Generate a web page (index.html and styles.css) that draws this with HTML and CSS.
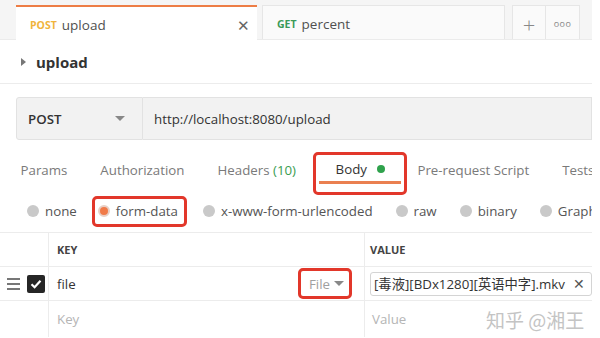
FILE: index.html
```html
<!DOCTYPE html>
<html lang="zh-CN">
<head>
  <meta charset="UTF-8" />
  <title>upload</title>
  <link rel="stylesheet" href="styles.css">
</head>
<body>
  <div class="app">

    <div class="tabbar">
      <div class="tab active">
        <span class="verb post">POST</span>
        <span class="tab-name">upload</span>
        <span class="tab-close">&#x2715;</span>
      </div>
      <div class="tab">
        <span class="verb get">GET</span>
        <span class="tab-name">percent</span>
      </div>
      <div class="tab-actions">
        <span class="tab-btn plus">+</span>
        <span class="tab-btn more">ooo</span>
      </div>
    </div>

    <div class="req-name">
      <span class="caret-right"></span>
      <span class="req-title">upload</span>
    </div>

    <div class="url-bar">
      <div class="method">
        <span>POST</span>
        <span class="caret-down"></span>
      </div>
      <div class="url">http://localhost:8080/upload</div>
    </div>

    <div class="req-tabs">
      <span class="req-tab">Params</span>
      <span class="req-tab">Authorization</span>
      <span class="req-tab">Headers <span class="count">(10)</span></span>
      <span class="mark body-tab">
        <span class="body-label">Body <span class="dot"></span></span>
      </span>
      <span class="req-tab">Pre-request Script</span>
      <span class="req-tab">Tests</span>
    </div>

    <div class="body-types">
      <span class="btype"><span class="radio"></span>none</span>
      <span class="btype mark selected"><span class="radio on"></span>form-data</span>
      <span class="btype"><span class="radio"></span>x-www-form-urlencoded</span>
      <span class="btype"><span class="radio"></span>raw</span>
      <span class="btype"><span class="radio"></span>binary</span>
      <span class="btype"><span class="radio"></span>GraphQL</span>
    </div>

    <div class="kv-table">
      <div class="kv-row head">
        <div class="c-ctl"></div>
        <div class="c-key">KEY</div>
        <div class="c-val">VALUE</div>
      </div>
      <div class="kv-row">
        <div class="c-ctl">
          <span class="drag"><i></i><i></i><i></i></span>
          <span class="check">
            <svg width="12" height="10" viewBox="0 0 12 10"><path d="M1.5 5.2 L4.6 8.2 L10.5 1.8" fill="none" stroke="#fff" stroke-width="2.2"/></svg>
          </span>
        </div>
        <div class="c-key">
          <span>file</span>
          <span class="mark type-pick">File <span class="caret-down small"></span></span>
        </div>
        <div class="c-val">
          <span class="chip">[毒液][BDx1280][英语中字].mkv <span class="chip-x">&#x2715;</span></span>
        </div>
      </div>
      <div class="kv-row empty">
        <div class="c-ctl"></div>
        <div class="c-key">Key</div>
        <div class="c-val">Value</div>
      </div>
      <div class="watermark">知乎 @湘王</div>
    </div>

  </div>
</body>
</html>
```

FILE: styles.css
```css
* {
  box-sizing: border-box;
  margin: 0;
  padding: 0;
}

body {
  font-family: "Open Sans", "Noto Sans CJK SC", sans-serif;
  font-size: 13.3px;
  color: #333;
  background: #fff;
}

.app {
  width: 592px;
  height: 338px;
  overflow: hidden;
  position: relative;
}

/* barra de abas */
.tabbar {
  display: flex;
  align-items: flex-end;
  height: 40px;
  background: #f5f5f5;
  border-bottom: 1px solid #ebebeb;
  padding-left: 16px;
}

.tab {
  display: flex;
  align-items: center;
  width: 243px;
  height: 34px;
  margin-left: 5px;
  padding: 3px 14px 0;
  background: #fafafa;
  border: 1px solid #e6e6e6;
  border-bottom: none;
  color: #505050;
}

.tab.active {
  width: 241px;
  margin-left: 0;
  padding-right: 7px;
  background: #fff;
  border: none;
  border-top: 2px solid #ed7d45;
  height: 35px;
  margin-bottom: -1px;
}

.verb {
  font-size: 10.5px;
  font-weight: 700;
  margin-right: 5px;
}

.verb.post { color: #f0b43c; }
.verb.get { color: #3a9a58; }

.tab-name {
  flex: 1;
  font-size: 13.5px;
}

.tab-close {
  font-size: 15px;
  color: #666;
}

.tab-actions {
  display: flex;
  height: 34px;
  margin-left: 7px;
  border: 1px solid #e6e6e6;
  border-bottom: none;
}

.tab-btn {
  display: flex;
  align-items: center;
  justify-content: center;
  width: 33px;
  padding-top: 2px;
  background: #fafafa;
  color: #888;
}

.tab-btn.plus {
  font-size: 22px;
  font-weight: 300;
  border-right: 1px solid #e6e6e6;
}

.tab-btn.more {
  font-size: 9px;
  letter-spacing: 0.5px;
}

/* nome da requisição */
.req-name {
  display: flex;
  align-items: center;
  height: 44px;
  padding-left: 21px;
  border-bottom: 1px solid #ececec;
}

.caret-right {
  width: 0;
  height: 0;
  border-top: 4px solid transparent;
  border-bottom: 4px solid transparent;
  border-left: 5px solid #777;
  margin-right: 10px;
}

.req-title {
  font-size: 15px;
  font-weight: 700;
  color: #333;
}

/* url */
.url-bar {
  display: flex;
  height: 43px;
  margin: 13px 0 0 16px;
}

.method {
  display: flex;
  align-items: center;
  justify-content: space-between;
  width: 127px;
  padding: 0 17px 0 11px;
  background: #f2f2f2;
  border: 1px solid #e2e2e2;
  border-radius: 3px 0 0 3px;
  font-weight: 600;
  color: #333;
}

.caret-down {
  width: 0;
  height: 0;
  border-left: 5px solid transparent;
  border-right: 5px solid transparent;
  border-top: 5px solid #888;
}

.caret-down.small {
  display: inline-block;
  margin-left: 4px;
  vertical-align: 2px;
}

.url {
  flex: 1;
  display: flex;
  align-items: center;
  padding-left: 11px;
  background: #f2f2f2;
  border: 1px solid #e2e2e2;
  border-left: none;
  color: #333;
}

/* abas da requisição */
.req-tabs {
  display: flex;
  align-items: flex-start;
  height: 43px;
  margin-top: 12px;
  padding-left: 4px;
  white-space: nowrap;
}

.req-tab {
  padding: 0 16.5px;
  margin-top: 8px;
  line-height: 20px;
  color: #7a7a7a;
}

.count {
  color: #3a9d52;
}

.mark {
  border: 3px solid #e2372a;
  border-radius: 5px;
}

.body-tab {
  display: flex;
  height: 43px;
  padding: 0 3px;
  margin-right: -6px;
}

.body-label {
  display: flex;
  align-items: center;
  height: 29px;
  line-height: 20px;
  padding: 2px 16px 0 17px;
  border-bottom: 3px solid #ea8050;
  color: #333;
}

.dot {
  display: inline-block;
  width: 8px;
  height: 8px;
  border-radius: 50%;
  background: #2fa24c;
  margin-left: 10px;
}

/* tipos de corpo */
.body-types {
  display: flex;
  align-items: center;
  height: 32px;
  padding-left: 27px;
  white-space: nowrap;
  color: #555;
}

.btype {
  display: flex;
  align-items: center;
  margin-right: 23px;
}

.btype.selected {
  height: 31px;
  padding: 0 6px 0 3px;
  margin-left: -8px;
  margin-right: 16px;
}

.radio {
  width: 12px;
  height: 12px;
  border-radius: 50%;
  background: #c9c9c9;
  margin-right: 6px;
}

.radio.on {
  background: #f07a48;
  border: 2px solid #e8cfc5;
}

/* tabela chave/valor */
.kv-table {
  margin-top: 5px;
  border-top: 1px solid #ececec;
}

.kv-row {
  display: flex;
  height: 34px;
  border-bottom: 1px solid #ececec;
}

.kv-row > div {
  display: flex;
  align-items: center;
}

.c-ctl {
  width: 48px;
  padding-left: 7px;
}

.c-key {
  width: 316px;
  padding: 0 12px 0 8px;
  border-left: 1px solid #ececec;
  justify-content: space-between;
}

.c-val {
  flex: 1;
  padding-left: 5px;
  border-left: 1px solid #ececec;
}

.kv-row.head {
  font-size: 11px;
  font-weight: 700;
  color: #444;
}

.kv-row.empty {
  height: 36px;
  border-bottom: none;
  color: #b5b5b5;
}

.kv-row.empty .c-val {
  padding-left: 7px;
}

.drag {
  display: flex;
  flex-direction: column;
  gap: 3px;
  width: 13px;
  margin-right: 7px;
}

.drag i {
  display: block;
  height: 2px;
  background: #777;
}

.check {
  display: flex;
  align-items: center;
  justify-content: center;
  width: 18px;
  height: 18px;
  border-radius: 2px;
  background: #262626;
}

.type-pick {
  display: flex;
  align-items: center;
  height: 31px;
  padding: 0 5px 0 8px;
  color: #a0a0a0;
}

.chip {
  display: flex;
  align-items: center;
  justify-content: space-between;
  width: 222px;
  height: 24px;
  padding: 0 6px 0 3px;
  border: 1px solid #d4d4d4;
  border-radius: 3px;
  color: #333;
  white-space: nowrap;
}

.chip-x {
  font-size: 14px;
  color: #555;
}

.watermark {
  position: absolute;
  left: 486px;
  top: 306px;
  font-family: "Noto Sans CJK SC", sans-serif;
  font-size: 19px;
  color: #c4c4c4;
  white-space: nowrap;
}
```
